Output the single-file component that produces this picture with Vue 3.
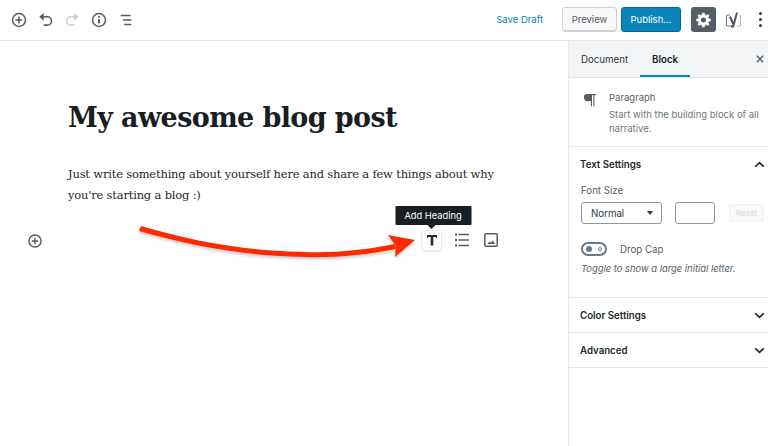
<script setup>
const panels = ['Color Settings', 'Advanced']
</script>

<template>
  <div class="app">
    <header class="topbar">
      <div class="tools">
        <svg class="tool" viewBox="0 0 20 20" width="18" height="18"><circle cx="10" cy="10" r="7.2" fill="none" stroke="#555d66" stroke-width="1.7"/><path d="M10 6.2v7.6M6.2 10h7.6" stroke="#555d66" stroke-width="1.7"/></svg>
        <svg class="tool" viewBox="0 0 20 20" width="18" height="18"><path d="M3.5 6.5h8a4.6 4.6 0 0 1 0 9.2H7.5" fill="none" stroke="#555d66" stroke-width="1.7"/><path d="M7.5 2.3v8.4L2.6 6.5z" fill="#555d66"/></svg>
        <svg class="tool" viewBox="0 0 20 20" width="18" height="18"><path d="M16.5 6.5h-8a4.6 4.6 0 0 0 0 9.2h4" fill="none" stroke="#ccd0d4" stroke-width="1.7"/><path d="M12.5 2.3v8.4l4.9-4.2z" fill="#ccd0d4"/></svg>
        <svg class="tool" viewBox="0 0 20 20" width="18" height="18"><circle cx="10" cy="10" r="7.2" fill="none" stroke="#555d66" stroke-width="1.7"/><path d="M10 9v5" stroke="#555d66" stroke-width="2"/><circle cx="10" cy="6.5" r="1.2" fill="#555d66"/></svg>
        <svg class="tool" viewBox="0 0 20 20" width="18" height="18"><path d="M4 5h11M6.5 10H16M8 15h8" stroke="#555d66" stroke-width="1.7"/></svg>
      </div>
      <div class="actions">
        <span class="save">Save Draft</span>
        <button class="preview">Preview</button>
        <button class="publish">Publish...</button>
        <span class="gear">
          <svg viewBox="0 0 19 21" width="17" height="18"><path fill="#fff" d="M18 12h-2.18c-.17.7-.44 1.35-.81 1.93l1.54 1.54-2.1 2.1-1.54-1.54c-.58.36-1.23.63-1.91.79V19H8v-2.18c-.68-.16-1.33-.43-1.91-.79l-1.54 1.54-2.12-2.12 1.54-1.54c-.36-.58-.63-1.23-.79-1.91H1V9.03h2.17c.16-.7.44-1.35.8-1.94L2.43 5.55l2.1-2.1 1.54 1.54c.58-.37 1.24-.64 1.93-.81V2h3v2.18c.68.16 1.33.43 1.91.79l1.54-1.54 2.12 2.12-1.54 1.54c.36.59.64 1.24.8 1.94H18V12zm-8.5 1.5c1.66 0 3-1.34 3-3s-1.34-3-3-3-3 1.34-3 3 1.34 3 3 3z"/></svg>
        </span>
        <svg class="yoast" viewBox="0 0 17 18" width="17" height="18"><path d="M5 4H3a1.500 1.500 0 0 0-1.500 1.500v8A1.500 1.500 0 0 0 3 15h5" fill="none" stroke="#6c7781" stroke-width="1.100"/><path d="M15.500 4v11H12" fill="none" stroke="#aab0b6" stroke-width="1"/><path d="M5 5.500l3.200 7.500M12 1.500L8.200 15.500H6" fill="none" stroke="#50575e" stroke-width="2"/></svg>
        <span class="dots"><i></i><i></i><i></i></span>
      </div>
    </header>

    <div class="body">
      <main class="editor">
        <h1>My awesome blog post</h1>
        <p>Just write something about yourself here and share a few things about why<br>you're starting a blog :)</p>
        <div class="inserter">
          <svg viewBox="0 0 20 20" width="16" height="16"><circle cx="10" cy="10" r="7.6" fill="none" stroke="#555d66" stroke-width="1.8"/><path d="M10 6v8M6 10h8" stroke="#555d66" stroke-width="1.8"/></svg>
          <div class="quick">
            <span class="t-btn">
              <span class="tip">Add Heading</span>
              <svg viewBox="0 0 12 12" width="12" height="12"><path d="M1 1h10v3h-1L9.600 3H7.300v8.500H4.700V3H2.400L2 4H1z" fill="#23282d"/></svg>
            </span>
            <svg viewBox="0 0 20 20" width="20" height="20"><path d="M6.500 4.500h10.500M6.500 10h10.500M6.500 15.500h10.500" stroke="#555d66" stroke-width="1.500"/><path d="M3 4.500h2M3 10h2M3 15.500h2" stroke="#555d66" stroke-width="2"/></svg>
            <svg viewBox="0 0 20 20" width="20" height="20"><rect x="3.800" y="3.800" width="12.400" height="12.400" rx="1" fill="none" stroke="#555d66" stroke-width="1.500"/><path d="M6.500 14l1.800-2.500 1.300 1.200L12 10.500l2 3.500z" fill="#555d66"/></svg>
          </div>
        </div>
        <svg class="arrow" viewBox="0 0 300 50" width="300" height="50">
          <defs><filter id="sh" x="-5%" y="-30%" width="110%" height="170%"><feDropShadow dx="0" dy="2" stdDeviation="1.500" flood-color="#000" flood-opacity=".22"/></filter></defs>
          <g filter="url(#sh)">
            <path d="M1 0C50 14 100 25 165 26c30 1 60-2 90-8l1 5c-31 6-61 9-91 8C100 30 50 19-1 5z" fill="#fc2c03"/>
            <path d="M248 9l27 5-20 17 1-11z" fill="#fc2c03"/>
          </g>
        </svg>
      </main>

      <aside class="sidebar">
        <div class="tabs">
          <span class="tab">Document</span>
          <span class="tab active">Block</span>
          <svg class="close" viewBox="0 0 10 10" width="8" height="8"><path d="M1 1l8 8M9 1l-8 8" stroke="#555d66" stroke-width="1.700"/></svg>
        </div>
        <div class="card">
          <svg class="pil" viewBox="0 0 14 16" width="13" height="14"><path d="M2 1h11v1.500h-1.500V15h-1.200V2.500H8.700V15H7.500V9H5.500A4 4 0 0 1 2 1z" fill="#555d66"/></svg>
          <div>
            <div class="card-title">Paragraph</div>
            <div class="card-desc">Start with the building block of all narrative.</div>
          </div>
        </div>
        <section class="panel open">
          <div class="panel-head"><span>Text Settings</span><svg viewBox="0 0 12 8" width="11" height="7"><path d="M1.200 6.500L6 1.800l4.800 4.700" fill="none" stroke="#23282d" stroke-width="1.900"/></svg></div>
          <div class="label">Font Size</div>
          <div class="font-row">
            <div class="select"><span>Normal</span><i></i></div>
            <div class="num"></div>
            <div class="reset">Reset</div>
          </div>
          <div class="drop">
            <span class="toggle"><b></b><u></u></span>
            <span>Drop Cap</span>
          </div>
          <div class="help">Toggle to show a large initial letter.</div>
        </section>
        <section v-for="p in panels" :key="p" class="panel">
          <div class="panel-head"><span>{{ p }}</span><svg viewBox="0 0 12 8" width="11" height="7"><path d="M1.200 1.500L6 6.200l4.800-4.700" fill="none" stroke="#23282d" stroke-width="1.900"/></svg></div>
        </section>
      </aside>
    </div>
  </div>
</template>

<style scoped>
.app { width: 768px; height: 446px; overflow: hidden; background: #fff; font-family: Inter, "Noto Sans", sans-serif; color: #555d66; display: flex; flex-direction: column; }
.topbar { height: 41px; box-sizing: border-box; border-bottom: 1px solid #e6e8ea; display: flex; justify-content: space-between; align-items: center; padding: 0 3px 1px 10px; }
.tools { display: flex; gap: 8.7px; align-items: center; }
.tool { display: block; }
.actions { display: flex; align-items: center; }
.save { color: #0e7fb5; font-size: 9.5px; margin-right: 19px; }
button { font-family: inherit; font-size: 9.5px; box-sizing: border-box; height: 25px; border-radius: 3px; padding: 0; }
.preview { width: 55px; background: #f7f7f7; border: 1px solid #ccd0d4; box-shadow: inset 0 -1px 0 #ccd0d4; color: #555d66; margin-right: 4px; }
.publish { width: 60px; background: #0a85ba; border: 1px solid #006a95; color: #fff; margin-right: 10px; }
.gear { width: 25px; height: 25px; border-radius: 3px; background: #555d66; display: flex; align-items: center; justify-content: center; margin-right: 9px; }
.yoast { margin-right: 13px; }
.dots { display: flex; flex-direction: column; gap: 3px; width: 10px; align-items: center; }
.dots i { width: 3px; height: 3px; border-radius: 50%; background: #32373c; }
.body { flex: 1; display: flex; min-height: 0; }
.editor { flex: 1; position: relative; padding: 0 0 0 68px; }
h1 { font-family: "DejaVu Serif", serif; font-weight: 700; font-size: 27px; line-height: 38px; margin: 58px 0 0; color: #191e23; letter-spacing: -.62px; white-space: nowrap; }
p { font-family: "DejaVu Serif", serif; font-size: 11.5px; line-height: 21px; margin: 27px 0 0; color: #23282d; letter-spacing: -.19px; white-space: nowrap; }
.inserter { display: flex; align-items: center; justify-content: space-between; height: 30px; margin: 20px 0 0 -41px; width: 474px; }
.quick { display: flex; align-items: center; gap: 9px; margin-bottom: 2px; }
.t-btn { position: relative; width: 21px; height: 21px; margin-right: 1px; display: flex; align-items: center; justify-content: center; border: 1px solid #e8eaeb; border-radius: 4px; box-sizing: border-box; background: #fff; box-shadow: 0 1px 1px rgba(0,0,0,.08); }
.tip { position: absolute; left: 50%; transform: translateX(calc(-50% + 1.5px)); bottom: 25px; width: 76px; height: 19px; background: #191e23; color: #fff; font-size: 9.3px; line-height: 19px; text-align: center; border-radius: 1px; white-space: nowrap; }
.tip::after { content: ""; position: absolute; left: 50%; margin-left: -5.5px; top: 100%; border: 4px solid transparent; border-top-color: #191e23; border-bottom: 0; }
.arrow { position: absolute; left: 140px; top: 185px; overflow: visible; }
.sidebar { width: 200px; border-left: 1px solid #e6e8ea; box-sizing: border-box; }
.tabs { height: 37px; background: #f3f4f5; display: flex; align-items: stretch; font-size: 9.7px; position: relative; border-bottom: 1px solid #e2e4e7; box-sizing: border-box; }
.tab { padding: 0 12px; display: flex; align-items: center; color: #32373c; }
.tab.active { color: #191e23; font-weight: 600; box-shadow: inset 0 -2px 0 #0a85ba; }
.close { position: absolute; right: 4px; top: 14px; }
.card { display: flex; gap: 12px; padding: 13px 6px 10px 15px; font-size: 9.5px; line-height: 14px; }
.pil { flex: none; margin-top: 2px; }
.card-title { color: #555d66; margin-bottom: 3px; }
.card-desc { color: #6c7781; }
.panel { border-top: 1px solid #e6e8ea; box-sizing: border-box; padding: 0 3px 0 12px; height: 35px; }
.panel.open { height: 151px; }
.panel:last-child { border-bottom: 1px solid #e6e8ea; height: 36px; }
.panel-head { height: 34px; margin-left: -1px; display: flex; justify-content: space-between; align-items: center; font-size: 9.7px; font-weight: 600; color: #23282d; }
.label { font-size: 9.7px; color: #555d66; margin-top: 3px; line-height: 14px; }
.font-row { display: flex; align-items: center; margin-top: 4px; }
.select { width: 81px; height: 22px; box-sizing: border-box; border: 1px solid #8d96a0; border-radius: 3px; display: flex; align-items: center; justify-content: space-between; padding: 0 8px 0 9px; font-size: 9.7px; color: #32373c; }
.select i { width: 0; height: 0; border: 3px solid transparent; border-top: 4px solid #32373c; border-bottom: 0; }
.num { width: 40px; height: 22px; box-sizing: border-box; border: 1px solid #8d96a0; border-radius: 3px; margin-left: 13px; }
.reset { width: 35px; height: 18px; margin-left: 14px; background: #f9f9f9; border: 1px solid #f0f0f0; border-radius: 2px; box-sizing: border-box; color: #d5d8db; font-size: 8px; line-height: 16px; text-align: center; }
.drop { display: flex; align-items: center; gap: 13px; font-size: 9.7px; margin-top: 18px; }
.toggle { position: relative; width: 26px; height: 14px; box-sizing: border-box; border: 2px solid #6c7781; border-radius: 7px; display: block; }
.toggle b { position: absolute; left: 3px; top: 2px; width: 6px; height: 6px; border-radius: 50%; background: #6c7781; }
.toggle u { position: absolute; right: 3px; top: 3px; width: 4px; height: 4px; box-sizing: border-box; border-radius: 50%; border: 1px solid #6c7781; }
.help { font-size: 9.4px; font-style: italic; color: #555d66; margin-top: 6px; line-height: 14px; white-space: nowrap; }
</style>
